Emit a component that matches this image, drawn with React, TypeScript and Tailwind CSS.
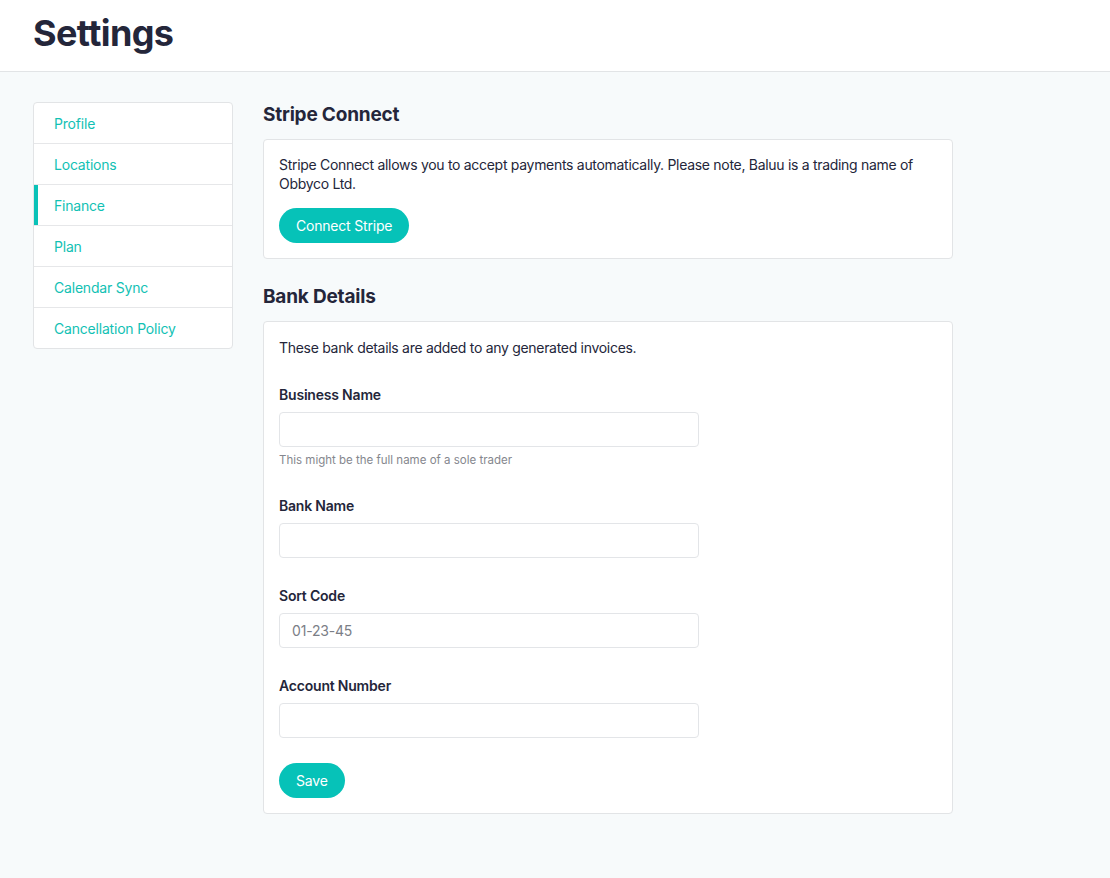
import React from "react";

const items = ["Profile", "Locations", "Finance", "Plan", "Calendar Sync", "Cancellation Policy"];

function Field({ label, placeholder, help }: { label: string; placeholder?: string; help?: string }) {
  return (
    <div className="flex flex-col">
      <label className="text-[14px] leading-[20px] font-semibold tracking-[-0.2px] text-[#24263a]">{label}</label>
      <input
        placeholder={placeholder}
        className="mt-[7px] h-[35px] w-[420px] rounded-[4px] border border-[#e3e5e8] bg-white px-[12px] text-[14px] tracking-[-0.2px] text-[#24263a] placeholder:text-[#7b7e86] outline-none"
      />
      {help && <p className="mt-[5px] text-[11.5px] leading-[16px] text-[#85878e]">{help}</p>}
    </div>
  );
}

export default function App() {
  return (
    <div className="min-h-[878px] bg-[#f7fafb] text-[#24263a]" style={{ fontFamily: "Inter, 'Noto Sans', sans-serif" }}>
      <header className="h-[72px] bg-white border-b border-[#e2e4e6] px-[33px] flex items-center">
        <h1 className="text-[36px] font-bold tracking-[-0.6px] text-[#24263a] leading-none -mt-[6px]">Settings</h1>
      </header>
      <div className="flex pl-[33px] pt-[30px] gap-[30px]">
        <nav className="w-[200px] self-start rounded-[4px] border border-[#e2e4e6] bg-white overflow-hidden">
          {items.map((it, i) => (
            <div
              key={it}
              className={`relative h-[40px] flex items-center pl-[20px] text-[14px] tracking-[-0.2px] text-[#12c1b4] ${i > 0 ? "h-[41px] border-t border-[#e6e7e9]" : ""}`}
            >
              {it === "Finance" && <span className="absolute left-0 top-0 bottom-0 w-[4px] bg-[#0ac2b8]" />}
              {it}
            </div>
          ))}
        </nav>
        <main className="w-[690px] pt-[1px] pb-[60px]">
          <h2 className="text-[19px] leading-[24px] font-bold tracking-[-0.2px] text-[#24263a]">Stripe Connect</h2>
          <div className="mt-[12px] rounded-[4px] border border-[#e2e4e6] bg-white p-[15px]">
            <p className="text-[14px] leading-[19px] tracking-[-0.3px] text-[#24263a]">
              Stripe Connect allows you to accept payments automatically. Please note, Baluu is a trading name of Obbyco Ltd.
            </p>
            <button className="mt-[15px] h-[35px] px-[17px] rounded-full bg-[#06c2b8] text-white text-[14px] tracking-[-0.2px]">Connect Stripe</button>
          </div>
          <h2 className="mt-[26px] text-[19px] leading-[24px] font-bold tracking-[-0.2px] text-[#24263a]">Bank Details</h2>
          <div className="mt-[12px] rounded-[4px] border border-[#e2e4e6] bg-white px-[15px] pt-[16px] pb-[15px]">
            <p className="text-[14px] leading-[20px] tracking-[-0.3px] text-[#24263a]">These bank details are added to any generated invoices.</p>
            <div className="mt-[27px] flex flex-col gap-[28px]">
              <Field label="Business Name" help="This might be the full name of a sole trader" />
              <Field label="Bank Name" />
              <Field label="Sort Code" placeholder="01-23-45" />
              <Field label="Account Number" />
            </div>
            <button className="mt-[25px] h-[35px] px-[17px] rounded-full bg-[#06c2b8] text-white text-[14px] tracking-[-0.2px]">Save</button>
          </div>
        </main>
      </div>
    </div>
  );
}
